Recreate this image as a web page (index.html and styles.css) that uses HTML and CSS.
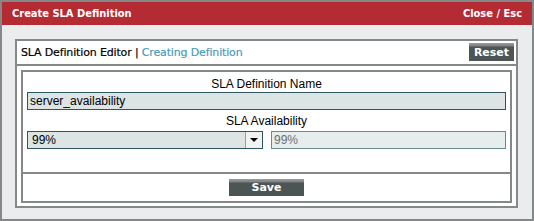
FILE: index.html
```html
<!DOCTYPE html>
<html lang="en">
<head>
  <meta charset="UTF-8">
  <title>Create SLA Definition</title>
  <link rel="stylesheet" href="styles.css">
</head>
<body>
  <div class="window">
    <div class="titlebar">
      <span class="title">Create SLA Definition</span>
      <span class="close">Close / Esc</span>
    </div>

    <div class="content">
      <div class="editor">
        <div class="editor-head">
          <span class="editor-title">SLA Definition Editor | <span class="state">Creating Definition</span></span>
          <button class="btn btn-reset">Reset</button>
        </div>

        <div class="form-box">
          <div class="fields">
            <div class="label">SLA Definition Name</div>
            <input class="text-input" type="text" value="server_availability">

            <div class="label label-second">SLA Availability</div>
            <div class="row">
              <div class="select">
                <span class="select-value">99%</span>
                <span class="select-arrow"></span>
              </div>
              <input class="text-input readonly" type="text" value="99%" readonly>
            </div>
          </div>
          <div class="footer">
            <button class="btn btn-save">Save</button>
          </div>
        </div>
      </div>
    </div>
  </div>
</body>
</html>
```

FILE: styles.css
```css
:root {
  --frame-gray: #858888;
  --bg-gray: #ebecee;
  --header-red: #b52b34;
  --field-border: #2e5660;
  --field-bg: #dce4e4;
}

* {
  box-sizing: border-box;
}

body {
  margin: 0;
  font-family: 'Liberation Sans', Arial, sans-serif;
  font-size: 12px;
  color: #000;
}

.window {
  width: 534px;
  height: 221px;
  border: 2px solid var(--frame-gray);
  background-color: var(--bg-gray);
}

.titlebar {
  height: 23px;
  background-color: var(--header-red);
  color: #fff;
  display: flex;
  justify-content: space-between;
  align-items: center;
  padding: 0 10px 0 10px;
  font-family: 'DejaVu Sans Condensed', 'DejaVu Sans', sans-serif;
  font-size: 11px;
  font-weight: bold;
}

.content {
  padding: 14px 14px 0 13px;
}

.editor {
  border: 2px solid var(--frame-gray);
  background-color: #fff;
  height: 169px;
}

.editor-head {
  height: 25px;
  border-bottom: 2px solid var(--frame-gray);
  display: flex;
  justify-content: space-between;
  align-items: flex-start;
  padding: 2px 2px 0 4px;
}

.editor-title {
  font-family: 'DejaVu Sans', sans-serif;
  font-size: 11px;
  line-height: 18px;
  padding-top: 1px;
  letter-spacing: -0.15px;
  font-weight: 500;
  -webkit-text-stroke: 0.2px currentColor;
}

.state {
  color: #4a9bbb;
}

.btn {
  border: none;
  color: #fff;
  font-family: 'DejaVu Sans', sans-serif;
  font-size: 11px;
  font-weight: bold;
  background: linear-gradient(#9a9e9e 0, #7a7f80 3px, #4c5454 4px, #4c5454 100%);
  padding: 0;
  cursor: pointer;
}

.btn-reset {
  width: 45px;
  height: 18px;
}

.btn-save {
  width: 75px;
  height: 17px;
}

.form-box {
  margin: 4px 4px 0 4px;
  border: 2px solid var(--frame-gray);
  height: 133px;
}

.fields {
  height: 102px;
  border-bottom: 2px solid var(--frame-gray);
  padding: 5px 4px 0 4px;
}

.label {
  text-align: center;
  line-height: 14px;
  height: 15px;
}

.label-second {
  margin-top: 4px;
  height: 16px;
}

.text-input {
  display: block;
  width: 100%;
  height: 18px;
  border: 1px solid var(--field-border);
  background-color: var(--field-bg);
  font-family: 'Liberation Sans', Arial, sans-serif;
  font-size: 12px;
  padding: 0 2px;
  margin: 0;
  color: #000;
  outline: none;
}

.row {
  display: flex;
  gap: 8px;
  margin-top: 1px;
}

.select {
  width: 236px;
  height: 18px;
  border: 1px solid var(--field-border);
  background-color: var(--field-bg);
  display: flex;
  align-items: center;
  justify-content: space-between;
  padding-left: 4px;
}

.select-arrow {
  width: 17px;
  height: 16px;
  border-left: 1px solid #98a0a2;
  background-color: #f2f2f2;
  position: relative;
}

.select-arrow::after {
  content: "";
  position: absolute;
  left: 4px;
  top: 6px;
  border-left: 4px solid transparent;
  border-right: 4px solid transparent;
  border-top: 4px solid #000;
}

.readonly {
  flex: 1;
  border-color: #6b8a90;
  background-color: #e7eded;
  color: #6c7070;
}

.footer {
  display: flex;
  justify-content: center;
  padding-top: 5px;
}
```
